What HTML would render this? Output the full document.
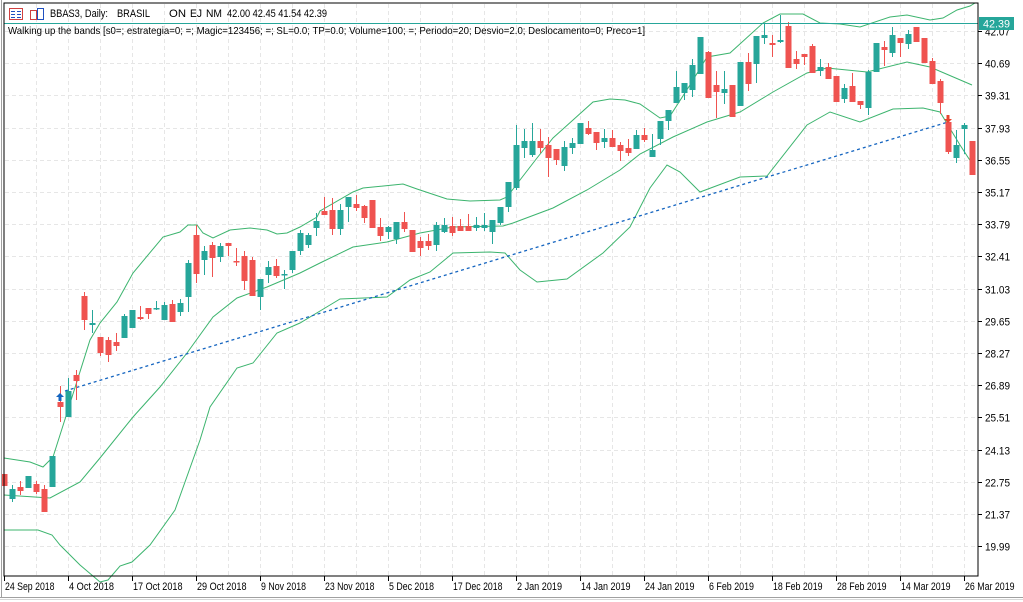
<!DOCTYPE html>
<html><head><meta charset="utf-8"><style>
body{margin:0;background:#fff;width:1023px;height:602px;overflow:hidden;font-family:"Liberation Sans",Tahoma,sans-serif;}
svg{position:absolute;left:0;top:0}
</style></head><body>
<svg id="s" width="1023" height="602" xmlns="http://www.w3.org/2000/svg" font-family="Liberation Sans, sans-serif" font-size="11">
<rect x="0" y="0" width="1023" height="602" fill="#fff"/>
<g id="grid" stroke="#e6e6e6" stroke-dasharray="4,3" stroke-width="1"></g>
<g id="bands" fill="none" stroke="#3cb46e" stroke-width="1"></g>
<line x1="65" y1="391" x2="948" y2="122" stroke="#1565c0" stroke-width="1.3" stroke-dasharray="3,3"/>
<g id="candles"></g>
<line x1="4" y1="23.5" x2="978" y2="23.5" stroke="#26a69a" stroke-width="1"/>
<path d="M60 393 l-4 4 h2.5 v4 h3 v-4 h2.5 z" fill="#1565c0"/>
<path d="M948 123 l-4 -4 h2.5 v-4 h3 v4 h2.5 z" fill="#e8442e"/>
<rect x="4" y="3" width="974" height="573" fill="none" stroke="#000" stroke-width="1"/>
<g id="axis" fill="#000"></g>
<rect x="979" y="17" width="35" height="13" fill="#26a69a"/>
<text x="983" y="27.5" fill="#fff" textLength="27" lengthAdjust="spacingAndGlyphs">42.39</text>
<line x1="0" y1="597.5" x2="1023" y2="597.5" stroke="#a0a0a0"/>
<line x1="0" y1="599.5" x2="1023" y2="599.5" stroke="#d8d8d8"/>
<line x1="1.5" y1="0" x2="1.5" y2="598" stroke="#a0a0a0"/>
<rect x="9.5" y="8.5" width="13" height="11" fill="#fff" stroke="#d04040"/>
<line x1="11" y1="11.5" x2="15" y2="11.5" stroke="#2050c0"/><line x1="17" y1="11.5" x2="21" y2="11.5" stroke="#2050c0"/>
<line x1="11" y1="14.5" x2="15" y2="14.5" stroke="#2050c0"/><line x1="17" y1="14.5" x2="21" y2="14.5" stroke="#2050c0"/>
<line x1="11" y1="17.5" x2="15" y2="17.5" stroke="#2050c0"/><line x1="17" y1="17.5" x2="21" y2="17.5" stroke="#2050c0"/>
<rect x="30.5" y="10.5" width="6" height="9" fill="#fff" stroke="#d04040"/>
<rect x="37.5" y="8.5" width="6" height="11" fill="#fff" stroke="#2050c0"/>
<text x="50" y="17" fill="#000" textLength="58" lengthAdjust="spacingAndGlyphs">BBAS3, Daily:</text>
<text x="117" y="17" fill="#000" textLength="33" lengthAdjust="spacingAndGlyphs">BRASIL</text>
<text x="169" y="17" fill="#000" textLength="17" lengthAdjust="spacingAndGlyphs">ON</text>
<text x="190" y="17" fill="#000" textLength="12" lengthAdjust="spacingAndGlyphs">EJ</text>
<text x="206" y="17" fill="#000" textLength="16" lengthAdjust="spacingAndGlyphs">NM</text>
<text x="227" y="17" fill="#000" textLength="100" lengthAdjust="spacingAndGlyphs">42.00 42.45 41.54 42.39</text>
<text x="8" y="34" fill="#000" font-size="10.5" textLength="637" lengthAdjust="spacingAndGlyphs">Walking up the bands [s0=; estrategia=0; =; Magic=123456; =; SL=0.0; TP=0.0; Volume=100; =; Periodo=20; Desvio=2.0; Deslocamento=0; Preco=1]</text>
</svg>
<script>
var NS="http://www.w3.org/2000/svg";
function el(p,t,a,txt){var e=document.createElementNS(NS,t);for(var k in a)e.setAttribute(k,a[k]);if(txt)e.textContent=txt;document.getElementById(p).appendChild(e);return e;}
var prices=["42.07","40.69","39.31","37.93","36.55","35.17","33.79","32.41","31.03","29.65","28.27","26.89","25.51","24.13","22.75","21.37","19.99"];
for(var i=0;i<prices.length;i++){var y=Math.round(31+i*32.2)+0.5;
 el("grid","line",{x1:5,y1:y,x2:977,y2:y});
 el("axis","line",{x1:978,y1:y,x2:982,y2:y,stroke:"#000"});
 el("axis","text",{x:985,y:y+4,textLength:25,lengthAdjust:"spacingAndGlyphs"},prices[i]);}
var dates=["24 Sep 2018","4 Oct 2018","17 Oct 2018","29 Oct 2018","9 Nov 2018","23 Nov 2018","5 Dec 2018","17 Dec 2018","2 Jan 2019","14 Jan 2019","24 Jan 2019","6 Feb 2019","18 Feb 2019","28 Feb 2019","14 Mar 2019","26 Mar 2019"];
for(var x=36.5;x<978;x+=32)el("grid","line",{x1:x,y1:4,x2:x,y2:575});
for(var i=0;i<dates.length;i++){var x=4.5+i*64;
 el("axis","line",{x1:x,y1:576,x2:x,y2:581,stroke:"#000"});
 var w=dates[i].length*4.5;
 el("axis","text",{x:x+0.5,y:590,textLength:w,lengthAdjust:"spacingAndGlyphs"},dates[i]);}
var up=[[4,458],[30,462],[43,467],[53,457],[67,413],[90,340],[100,323],[117,302],[133,273],[163,237],[180,232],[188,225],[197,225],[203,233],[213,238],[230,230],[250,228],[267,230],[277,234],[287,233],[300,227],[317,217],[320,211],[353,192],[363,188],[403,184],[417,189],[447,199],[470,201],[500,200],[507,197],[520,180],[537,158],[553,138],[573,120],[593,102],[610,99],[625,100],[640,104],[660,118],[670,116],[690,85],[707,57],[730,53],[763,23],[780,14],[803,14],[820,23],[840,24],[860,27],[890,17],[907,15],[930,20],[943,18],[957,10],[970,6],[975,3]];
var mid=[[4,495],[50,498],[80,482],[100,458],[133,417],[160,387],[187,353],[213,317],[237,298],[267,287],[300,273],[320,263],[353,247],[387,242],[420,233],[453,227],[503,226],[513,223],[553,208],[587,190],[620,170],[640,154],[673,137],[707,122],[740,112],[773,92],[807,73],[827,68],[847,70],[867,72],[907,62],[930,67],[972,85]];
var lo=[[4,530],[38,530],[52,535],[60,545],[80,565],[100,582],[108,580],[120,566],[132,562],[150,545],[175,510],[200,440],[210,407],[237,368],[253,363],[277,333],[300,323],[330,305],[340,299],[387,297],[410,280],[430,272],[453,253],[490,252],[505,253],[520,270],[537,282],[567,279],[603,253],[630,227],[650,188],[667,165],[680,172],[700,192],[740,177],[767,176],[807,125],[830,112],[860,122],[893,109],[923,108],[940,112],[960,145],[973,165]];
[up,mid,lo].forEach(function(p){el("bands","polyline",{points:p.map(function(q){return q.join(",")}).join(" ")});});
var C=[[474,486,474,486,0],[489,499,485,502,1],[487,491,481,495,0],[476,488,476,488,1],[484,492,481,494,0],[489,512,485,512,0],[456,487,456,487,1],[402,407,386,422,0],[391,417,378,417,1],[375,381,370,400,0],[296,320,292,330,0],[323,325,310,333,1],[337,353,337,356,0],[340,355,337,362,0],[342,346,333,351,0],[316,338,314,338,1],[310,328,310,328,1],[317,319,306,320,0],[308,314,308,319,0],[308,309,301,310,1],[305,320,302,320,1],[304,322,300,322,0],[303,312,299,316,1],[263,297,260,312,1],[235,274,225,283,0],[251,260,246,275,1],[245,258,242,277,0],[246,257,243,262,1],[243,246,243,256,0],[261,262,248,266,0],[256,281,251,290,0],[260,296,257,296,0],[279,297,279,310,1],[267,275,261,283,1],[266,276,259,278,0],[274,275,270,289,1],[251,270,251,273,1],[233,251,230,255,1],[235,245,233,248,1],[221,228,213,236,1],[211,215,197,215,0],[210,229,198,235,0],[210,229,204,235,1],[197,207,197,222,1],[204,208,195,211,0],[206,218,205,223,0],[200,228,200,228,0],[227,236,218,241,0],[227,232,226,239,1],[222,239,222,244,1],[222,229,212,232,0],[230,252,230,252,0],[241,248,237,256,0],[241,246,234,250,0],[225,245,222,251,1],[225,232,218,233,1],[226,233,217,236,0],[226,231,219,231,0],[226,231,214,231,0],[225,228,217,231,1],[225,228,213,231,1],[220,232,220,244,1],[207,223,207,225,1],[182,207,182,212,1],[145,188,125,190,1],[141,148,129,158,1],[141,155,123,157,1],[141,148,129,153,0],[145,158,137,177,0],[149,160,149,165,0],[147,166,141,171,1],[143,148,138,154,1],[123,144,123,144,1],[128,134,121,135,0],[132,143,132,150,0],[138,142,129,148,1],[138,147,130,147,0],[145,151,142,161,0],[148,153,139,156,0],[135,149,130,149,1],[135,140,128,142,0],[150,157,134,157,1],[121,139,121,145,1],[110,121,110,130,1],[87,103,71,103,1],[83,93,83,100,1],[65,90,59,97,1],[37,74,37,74,1],[52,98,51,98,0],[85,92,71,118,0],[89,93,71,104,1],[85,117,85,117,0],[62,106,62,106,1],[62,84,53,91,0],[36,64,36,83,1],[35,38,23,44,1],[43,45,35,57,0],[40,42,15,43,1],[26,68,22,68,0],[59,64,51,69,0],[54,57,54,65,0],[46,73,44,73,0],[67,71,59,76,1],[67,79,63,79,0],[76,102,76,102,0],[88,99,84,103,1],[86,102,73,102,0],[101,105,101,109,0],[72,108,70,115,1],[43,72,43,72,1],[47,50,41,66,0],[35,53,27,57,1],[38,43,38,57,0],[34,44,30,49,1],[27,42,27,42,0],[38,63,38,63,0],[61,84,58,84,0],[81,103,79,114,0],[122,152,122,154,0],[145,158,130,163,1],[125,129,123,154,1],[141,175,141,175,0]];
for(var k=0;k<C.length;k++){var c=C[k],x=4.5+8*k,col=c[4]?"#26a69a":"#ef5350";
 el("candles","line",{x1:x,y1:c[2],x2:x,y2:c[3],stroke:col,"stroke-width":1});
 var h=Math.max(c[1]-c[0],1.5);
 el("candles","rect",{x:x-3,y:c[0],width:6,height:h,fill:col});}
</script>
</body></html>
